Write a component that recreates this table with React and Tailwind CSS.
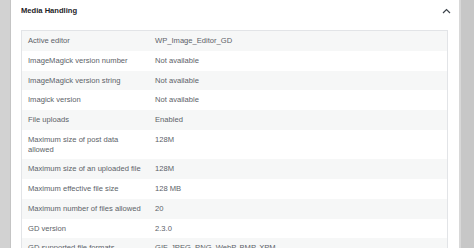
import React from 'react';

const rows = [
  ['Active editor', 'WP_Image_Editor_GD'],
  ['ImageMagick version number', 'Not available'],
  ['ImageMagick version string', 'Not available'],
  ['Imagick version', 'Not available'],
  ['File uploads', 'Enabled'],
  ['Maximum size of post data\nallowed', '128M'],
  ['Maximum size of an uploaded file', '128M'],
  ['Maximum effective file size', '128 MB'],
  ['Maximum number of files allowed', '20'],
  ['GD version', '2.3.0'],
  ['GD supported file formats', 'GIF, JPEG, PNG, WebP, BMP, XPM'],
];

const App = () => {
  return (
    <div
      className="flex w-[474px] h-[248px] overflow-hidden bg-[#cbcbcb]"
      style={{ fontFamily: '"Liberation Sans", Arial, sans-serif' }}
    >
      <div className="w-[11px] shrink-0 bg-[#d2d2d2] border-r border-[#c4c4c4]" />

      <div className="w-[448px] shrink-0 bg-white flex flex-col pl-[10px] pr-[11px]">
        {/* Header */}
        <div className="h-[30px] shrink-0 flex items-start justify-between pt-[6px]">
          <h3 className="text-[7.6px] leading-[10px] font-bold text-[#1d2327]">Media Handling</h3>
          <svg width="9" height="6" viewBox="0 0 9 6" className="mt-[2px] mr-[-3px]">
            <path d="M1 5 L4.5 1.5 L8 5" fill="none" stroke="#3c434a" strokeWidth="1.2" />
          </svg>
        </div>

        {/* Table */}
        <div className="border border-[#e2e4e7] border-b-0">
          <table className="w-full border-collapse text-[7.6px] leading-[9.75px] text-[#5c6268]">
            <tbody>
              {rows.map(([label, value], i) => (
                <tr key={label} className={i % 2 === 0 ? 'bg-[#f6f7f7]' : 'bg-white'}>
                  <td className="w-[133px] pl-[6px] pr-[8px] py-[5px] align-top whitespace-pre-line">{label}</td>
                  <td className="py-[5px] align-top">{value}</td>
                </tr>
              ))}
            </tbody>
          </table>
        </div>
      </div>

      <div className="flex-1 bg-[#c7c7c7] border-l-2 border-[#d8d8d8]" />
    </div>
  );
};

export default App;
